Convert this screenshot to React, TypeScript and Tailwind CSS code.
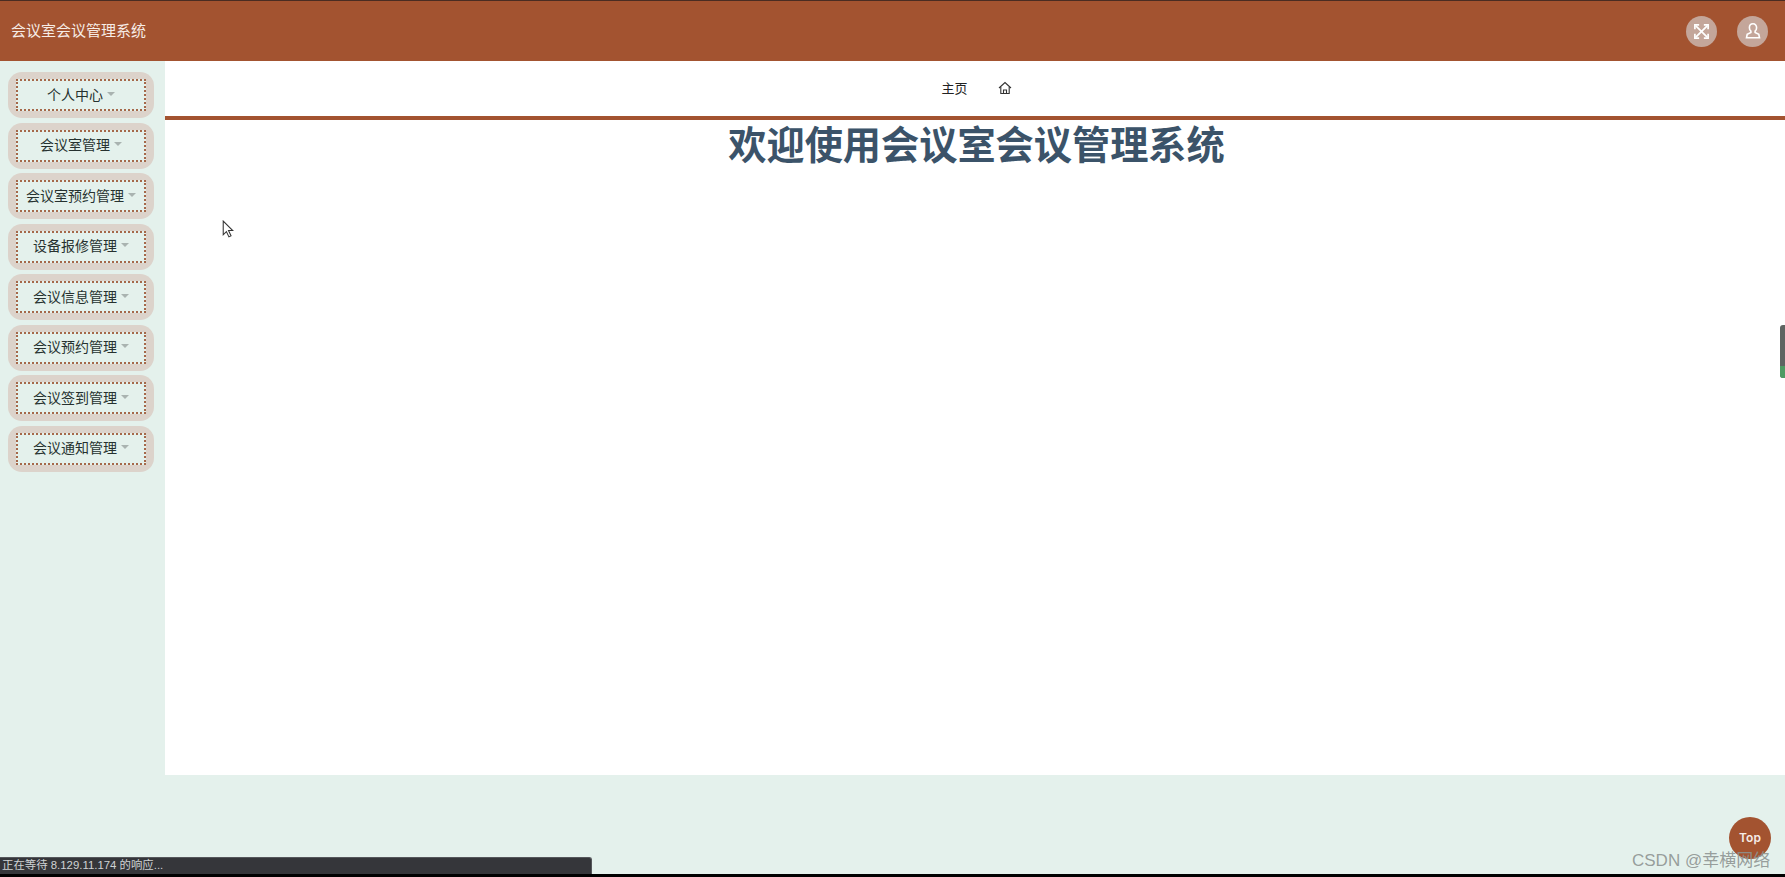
const menuItems = [
  "个人中心",
  "会议室管理",
  "会议室预约管理",
  "设备报修管理",
  "会议信息管理",
  "会议预约管理",
  "会议签到管理",
  "会议通知管理",
];

const fontStack = "font-['Liberation_Sans','Noto_Sans_CJK_SC',sans-serif]";

function SideButton({ label }: { label: string }) {
  return (
    <div className="h-[46px] rounded-[14px] bg-[#dcd3cb] px-2 py-[7px]">
      <div className="flex h-[32px] items-center justify-center gap-[4px] border-2 border-dotted border-[#a5684a] bg-[#e4f1ec] text-[14px] text-[#26312f]">
        <span>{label}</span>
        <span className="mb-[3px] h-0 w-0 border-x-[4px] border-t-[4px] border-x-transparent border-t-[#a9b3b0]" />
      </div>
    </div>
  );
}

export default function App() {
  return (
    <div className={`relative flex h-[877px] flex-col overflow-hidden bg-[#e4f1ec] ${fontStack}`}>
      <header className="flex h-[61px] shrink-0 items-center justify-between border-t border-[#4a2c22] bg-[#a35330] pl-[11px] pr-[17px]">
        <span className="text-[15px] text-[#f6ece6]">会议室会议管理系统</span>
        <div className="flex items-center gap-[20px]">
          <span className="flex h-[31px] w-[31px] items-center justify-center rounded-full bg-[#c4a69a]">
            <svg viewBox="0 0 18 18" className="h-[17px] w-[17px]" fill="none" stroke="white" strokeWidth="1.8">
              <path d="M3 3l12 12M15 3 3 15" />
              <path d="M2 6.500V2h4.500M11.500 2H16v4.500M16 11.500V16h-4.500M6.500 16H2v-4.500" />
            </svg>
          </span>
          <span className="flex h-[31px] w-[31px] items-center justify-center rounded-full bg-[#c4a69a]">
            <svg viewBox="0 0 18 18" className="h-[18px] w-[18px]" fill="none" stroke="white" strokeWidth="1.6">
              <path d="M9 1.800c-2.300 0-3.600 1.700-3.600 3.900 0 1.500.6 2.700 1.500 3.500v1.400L3.200 12.300 2.500 15.800h13l-.7-3.500-3.700-1.700V9.200c.9-.8 1.500-2 1.500-3.500 0-2.200-1.300-3.900-3.600-3.900z" />
            </svg>
          </span>
        </div>
      </header>

      <div className="flex items-start">
        <aside className="flex w-[165px] shrink-0 flex-col gap-[4.5px] pl-2 pr-[11px] pt-[11px]">
          {menuItems.map((item) => (
            <SideButton key={item} label={item} />
          ))}
        </aside>

        <main className="h-[714px] flex-1 bg-white">
          <nav className="box-content flex h-[55px] items-center justify-center gap-[30px] border-b-4 border-[#a35330] pl-[3px] text-[13px] text-[#222222]">
            <span>主页</span>
            <svg viewBox="0 0 14 14" className="mb-[1px] h-[14px] w-[14px]" fill="none" stroke="#333333" strokeWidth="1.1">
              <path d="M1 7 7 1.500 13 7" />
              <path d="M2.800 6v6.500h8.400V6" />
              <path d="M5.500 12.500V9h3v3.500" />
            </svg>
          </nav>
          <h1 className="pl-[3px] pt-[3px] text-center text-[38.2px] font-bold leading-[46px] text-[#3b5369]">
            欢迎使用会议室会议管理系统
          </h1>
        </main>
      </div>

      {/* mouse pointer */}
      <svg viewBox="0 0 12 18" className="absolute left-[222px] top-[220px] h-[19px] w-[13px]" fill="white" stroke="#333333" strokeWidth="1">
        <path d="M1 1v13l3-3 2.400 5 2-1-2.400-5H10z" />
      </svg>

      {/* scroll handle at the right edge */}
      <div className="absolute right-0 top-[325px] flex h-[53px] w-[5px] flex-col justify-end overflow-hidden rounded-l-[3px] bg-[#5f6461]">
        <div className="h-[12px] bg-[#4f9a62]" />
      </div>

      <button className="absolute left-[1729px] top-[817px] flex h-[42px] w-[42px] items-center justify-center rounded-full bg-[#a35330] font-['Inter',sans-serif] text-[12px] font-semibold text-[#f6ece6]">
        Top
      </button>

      <span className="absolute left-[1632px] top-[850px] text-[17px] leading-[22px] text-[#8d9391]/90">CSDN @幸横网络</span>

      {/* browser status bubble */}
      <div className="absolute bottom-[3px] left-0 flex h-[17px] w-[592px] items-center rounded-tr-[3px] border-r border-t border-[#55575b] bg-[#35363a] pl-[2px] text-[11.4px] text-[#cfd2d4]">
        正在等待 8.129.11.174 的响应...
      </div>
      <div className="absolute bottom-0 left-0 h-[3px] w-full bg-black" />
    </div>
  );
}
